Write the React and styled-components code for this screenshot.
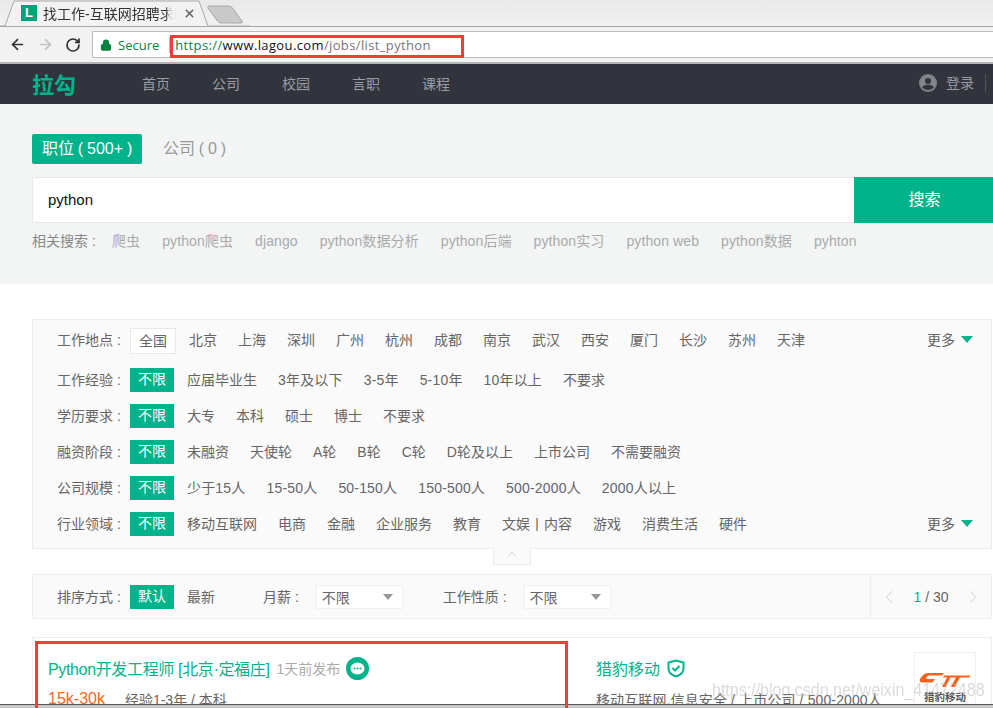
import React from 'react';
import styled, { createGlobalStyle } from 'styled-components';
import { ArrowLeft, ArrowRight, RotateCw, X, Lock, ChevronLeft, ChevronRight, ChevronUp } from 'lucide-react';

const GREEN = '#00b38a';
const FONT = '"Liberation Sans", "Noto Sans CJK SC", sans-serif';

const Global = createGlobalStyle`
    html, body {
        margin: 0;
        padding: 0;
        background: #fff;
    }
    * {
        box-sizing: border-box;
    }
`;

const Page = styled.div`
    position: relative;
    width: 993px;
    height: 708px;
    overflow: hidden;
    font-family: ${FONT};
    font-size: 14px;
    color: #666;
`;

/* browser chrome */
const TabStrip = styled.div`
    position: relative;
    height: 27px;
    padding-left: 21px;
    display: flex;
    align-items: center;
    background: linear-gradient(#e9e9e9, #f1f1f1);
    border-bottom: 1px solid #a8a8a8;
`;
const TabShape = styled.svg`
    position: absolute;
    left: 0;
    top: 0;
`;
const Favicon = styled.div`
    position: relative;
    width: 16px;
    height: 16px;
    margin-right: 6px;
    background: #00a37c;
    color: #fff;
    font: bold 13px/16px "Liberation Sans", sans-serif;
    text-align: center;
`;
const TabTitle = styled.div`
    position: relative;
    width: 134px;
    overflow: hidden;
    white-space: nowrap;
    font-size: 14px;
    color: #333;
    -webkit-mask-image: linear-gradient(to right, #000 92%, rgba(0, 0, 0, 0.25) 94%, transparent);
`;
const TabClose = styled(X)`
    position: relative;
    margin-left: 6px;
    color: #5a5a5a;
`;
const Toolbar = styled.div`
    height: 37px;
    display: flex;
    align-items: center;
    padding: 0 0 0 3px;
    background: #f2f2f2;
    border-bottom: 2px solid #b4b4b4;
`;
const NavIcon = styled.div`
    width: 28px;
    display: flex;
    justify-content: center;
    color: ${p => (p.$off ? '#c4c4c4' : '#333')};
`;
const AddressBar = styled.div`
    flex: 1;
    height: 27px;
    margin-left: 5px;
    display: flex;
    align-items: center;
    padding-left: 7px;
    background: #fff;
    border: 1px solid #bdbdbd;
    border-right: 0;
    border-radius: 2px 0 0 2px;
    font-family: "Open Sans", sans-serif;
    font-size: 13px;
`;
const SecureLabel = styled.span`
    margin-left: 6px;
    padding-right: 10px;
    color: #0b8043;
    border-right: 1px solid #bbb;
    line-height: 16px;
`;
const Url = styled.span`
    margin-left: 5px;
    letter-spacing: 0.37px;
    color: #777;
    b {
        font-weight: 400;
        color: #111;
    }
    i {
        font-style: normal;
        color: #0b8043;
    }
`;

/* site nav */
const SiteNav = styled.nav`
    height: 40px;
    display: flex;
    align-items: center;
    padding: 0 7px 2px 32px;
    background: #31343d;
    color: #9a9ca2;
`;
const Logo = styled.div`
    width: 110px;
    color: ${GREEN};
    font-size: 22px;
    font-weight: 700;
`;
const SiteLink = styled.a`
    margin-right: 42px;
`;
const Login = styled.div`
    margin-left: auto;
    display: flex;
    align-items: center;
    gap: 9px;
    padding-right: 11px;
    border-right: 1px solid #555;
    line-height: 13px;
`;

/* search */
const SearchArea = styled.section`
    height: 180px;
    padding: 30px 0 0 32px;
    background: #f2f5f4;
`;
const SearchTabs = styled.div`
    display: flex;
    align-items: center;
    font-size: 16px;
    word-spacing: -0.6px;
`;
const SearchTab = styled.div`
    width: ${p => (p.$active ? '110px' : 'auto')};
    height: 30px;
    line-height: 30px;
    padding: 0 ${p => (p.$active ? '10px' : '0')};
    margin-right: 21px;
    border-radius: 2px;
    white-space: pre;
    background: ${p => (p.$active ? GREEN : 'transparent')};
    color: ${p => (p.$active ? '#fff' : '#999')};
`;
const SearchRow = styled.div`
    display: flex;
    height: 46px;
    margin-top: 13px;
`;
const SearchInput = styled.div`
    width: 822px;
    padding-left: 15px;
    line-height: 44px;
    font-size: 15px;
    color: #111;
    background: #fff;
    border: 1px solid #e8eaea;
    border-right: 0;
`;
const SearchButton = styled.div`
    flex: 1;
    padding-left: 2px;
    background: ${GREEN};
    color: #fff;
    font-size: 16px;
    line-height: 46px;
    text-align: center;
`;
const Related = styled.div`
    display: flex;
    gap: 22px;
    margin-top: 10px;
    line-height: 17px;
    letter-spacing: 0.1px;
    color: #aaa;
`;
const RelatedLabel = styled.span`
    width: 58px;
    white-space: nowrap;
    letter-spacing: 0;
    color: #888;
`;

/* filters */
const FilterBox = styled.section`
    position: relative;
    margin: 35px 1px 0 32px;
    height: 230px;
    padding: 2px 18px 0 24px;
    background: #fafafa;
    border: 1px solid #ededed;
`;
const FilterRow = styled.div`
    height: 36px;
    display: flex;
    align-items: center;
    margin-bottom: ${p => (p.$first ? '4px' : '0')};
`;
const FilterLabel = styled.div`
    width: 73px;
    padding-bottom: 2px;
    white-space: pre;
    color: #666;
`;
const Option = styled.a`
    margin-right: 21px;
    padding-bottom: 2px;
    white-space: nowrap;
    color: #666;
    letter-spacing: ${p => (p.$num ? '0.18px' : '0')};
`;
const Selected = styled.a`
    width: 44px;
    height: 24px;
    margin-right: 13px;
    line-height: 23px;
    text-align: center;
    background: ${GREEN};
    color: #fff;
`;
const SelectedPlain = styled.a`
    width: 46px;
    height: 26px;
    margin: 2px 13px 0 0;
    line-height: 24px;
    text-align: center;
    background: #fff;
    border: 1px solid #e8e8e8;
    color: #666;
`;
const More = styled.a`
    margin-left: auto;
    padding-bottom: 2px;
    display: flex;
    align-items: center;
    gap: 6px;
    color: #666;
    &::after {
        content: '';
        border-left: 6.5px solid transparent;
        border-right: 6.5px solid transparent;
        border-top: 7px solid ${GREEN};
    }
`;
const Collapse = styled.div`
    position: absolute;
    left: 460px;
    bottom: -17px;
    height: 18px;
    width: 38px;
    display: flex;
    justify-content: center;
    background: #fafafa;
    border: 1px solid #ededed;
    border-top: 0;
    color: #ccc;
`;

/* sort bar */
const SortBar = styled.section`
    height: 45px;
    margin: 25px 1px 0 32px;
    padding: 1px 0 0 24px;
    display: flex;
    align-items: center;
    background: #fafafa;
    border: 1px solid #ededed;
`;
const SortLabel = styled.div`
    padding-bottom: 2px;
    white-space: pre;
    color: #666;
    margin-left: ${p => p.$gap || 0}px;
    margin-right: ${p => p.$after || 0}px;
`;
const FakeSelect = styled.div`
    width: 87px;
    height: 24px;
    padding-left: 5px;
    display: flex;
    align-items: center;
    justify-content: space-between;
    padding-right: 9px;
    background: #fff;
    border: 1px solid #f0f0f0;
    color: #666;
    &::after {
        content: '';
        border-left: 5.5px solid transparent;
        border-right: 5.5px solid transparent;
        border-top: 6px solid #999;
    }
`;
const Pager = styled.div`
    margin: -1px 0 0 auto;
    width: 121px;
    height: 43px;
    display: flex;
    align-items: center;
    justify-content: space-between;
    padding: 0 7px;
    border-left: 1px solid #ededed;
    color: #666;
    b {
        font-weight: 400;
        color: ${GREEN};
    }
`;

/* job card */
const JobCard = styled.section`
    height: 100px;
    margin: 18px 1px 0 32px;
    padding: 18px 15px 0 15px;
    display: flex;
    background: #fff;
    border: 1px solid #ededed;
`;
const JobLeft = styled.div`
    width: 548px;
`;
const JobRight = styled.div`
    flex: 1;
`;
const TitleLine = styled.div`
    display: flex;
    align-items: center;
    height: 24px;
`;
const JobTitle = styled.a`
    font-size: 16px;
    letter-spacing: -0.35px;
    color: ${GREEN};
    white-space: nowrap;
`;
const CompanyName = styled.a`
    margin-right: 7px;
    font-size: 16px;
    color: ${GREEN};
`;
const Posted = styled.span`
    margin-left: 7px;
    margin-right: 6px;
    color: #aaa;
`;
const Salary = styled.span`
    font-size: 16px;
    color: #fd661f;
    margin-right: 20px;
`;
const InfoLine = styled.div`
    margin-top: 7px;
    height: 24px;
    display: flex;
    align-items: center;
    white-space: nowrap;
    letter-spacing: ${p => (p.$wide ? '0.12px' : '0')};
    color: #666;
`;
const CompanyLogo = styled.div`
    width: 62px;
    height: 62px;
    margin-top: -4px;
    padding-top: 19px;
    text-align: center;
    border: 1px solid #f0f0f0;
    font-size: 10.5px;
    font-weight: 700;
    color: #555;
    line-height: 13px;
`;
const RightRow = styled.div`
    display: flex;
    justify-content: space-between;
`;

/* overlays on top of the picture */
const RedBox = styled.div`
    position: absolute;
    left: ${p => p.$x}px;
    top: ${p => p.$y}px;
    width: ${p => p.$w}px;
    height: ${p => p.$h}px;
    border: 3px solid #f93a3a;
`;
const Watermark = styled.div`
    position: absolute;
    left: 712px;
    top: 680px;
    font-size: 18px;
    line-height: 20px;
    transform: scaleX(0.89);
    transform-origin: left center;
    color: rgba(170, 170, 170, 0.42);
    white-space: nowrap;
`;
const BottomEdge = styled.div`
    position: absolute;
    left: 0;
    right: 0;
    bottom: 0;
    height: 4px;
    background: #c8c8c8;
    border-top: 1px solid #555;
`;

const filters = [
    { label: '工作经验 :', items: ['应届毕业生', '3年及以下', '3-5年', '5-10年', '10年以上', '不要求'] },
    { label: '学历要求 :', items: ['大专', '本科', '硕士', '博士', '不要求'] },
    { label: '融资阶段 :', items: ['未融资', '天使轮', 'A轮', 'B轮', 'C轮', 'D轮及以上', '上市公司', '不需要融资'] },
    { label: '公司规模 :', items: ['少于15人', '15-50人', '50-150人', '150-500人', '500-2000人', '2000人以上'] },
    { label: '行业领域 :', items: ['移动互联网', '电商', '金融', '企业服务', '教育', '文娱丨内容', '游戏', '消费生活', '硬件'], more: true },
];
const cities = ['北京', '上海', '深圳', '广州', '杭州', '成都', '南京', '武汉', '西安', '厦门', '长沙', '苏州', '天津'];
const related = ['爬虫', 'python爬虫', 'django', 'python数据分析', 'python后端', 'python实习', 'python web', 'python数据', 'pyhton'];
const links = ['首页', '公司', '校园', '言职', '课程'];

const App = () => {
    return (
        <Page>
            <Global />
            <TabStrip>
                <TabShape width="250" height="27">
                    <path d="M0 26H5L14 1H199L208 26H993" fill="#f2f2f2" stroke="#a8a8a8" />
                    <path d="M208 6H228C231 6 232 7 234 10L242 21C243 23 242 23 240 23H222C219 23 218 22 216 19L208 8Z" fill="#c9c9c9" stroke="#a8a8a8" />
                </TabShape>
                <Favicon>L</Favicon>
                <TabTitle>找工作-互联网招聘求职网</TabTitle>
                <TabClose size={13} strokeWidth={2.5} />
            </TabStrip>
            <Toolbar>
                <NavIcon><ArrowLeft size={17} strokeWidth={2.4} /></NavIcon>
                <NavIcon $off><ArrowRight size={17} strokeWidth={2.4} /></NavIcon>
                <NavIcon><RotateCw size={16} strokeWidth={2.6} /></NavIcon>
                <AddressBar>
                    <Lock size={12} color="#0b8043" fill="#0b8043" strokeWidth={2.5} />
                    <SecureLabel>Secure</SecureLabel>
                    <Url><i>https://</i><b>www.lagou.com</b>/jobs/list_python</Url>
                </AddressBar>
            </Toolbar>
            <SiteNav>
                <Logo>拉勾</Logo>
                {links.map(l => <SiteLink key={l}>{l}</SiteLink>)}
                <Login>
                    <svg width="18" height="18" viewBox="0 0 18 18">
                        <circle cx="9" cy="9" r="9" fill="#82848a" />
                        <circle cx="9" cy="7" r="3" fill="#31343d" />
                        <path d="M3.2 13.2C4.6 11.2 6.6 10.8 9 10.8S13.4 11.2 14.8 13.2C13.4 15 11.4 16 9 16S4.6 15 3.2 13.2Z" fill="#31343d" />
                    </svg>
                    登录
                </Login>
            </SiteNav>
            <SearchArea>
                <SearchTabs>
                    <SearchTab $active>职位 ( 500+ )</SearchTab>
                    <SearchTab>公司 ( 0 )</SearchTab>
                </SearchTabs>
                <SearchRow>
                    <SearchInput>python</SearchInput>
                    <SearchButton>搜索</SearchButton>
                </SearchRow>
                <Related>
                    <RelatedLabel>相关搜索 :</RelatedLabel>
                    {related.map(r => <span key={r}>{r}</span>)}
                </Related>
            </SearchArea>
            <FilterBox>
                <FilterRow $first>
                    <FilterLabel>工作地点 :</FilterLabel>
                    <SelectedPlain>全国</SelectedPlain>
                    {cities.map(c => <Option key={c}>{c}</Option>)}
                    <More>更多</More>
                </FilterRow>
                {filters.map(f => (
                    <FilterRow key={f.label}>
                        <FilterLabel>{f.label}</FilterLabel>
                        <Selected>不限</Selected>
                        {f.items.map(i => <Option key={i} $num={/\d/.test(i)}>{i}</Option>)}
                        {f.more && <More>更多</More>}
                    </FilterRow>
                ))}
                <Collapse><ChevronUp size={14} strokeWidth={1.5} /></Collapse>
            </FilterBox>
            <SortBar>
                <FilterLabel>排序方式 :</FilterLabel>
                <Selected>默认</Selected>
                <SortLabel>最新</SortLabel>
                <SortLabel $gap={48} $after={17}>月薪 :</SortLabel>
                <FakeSelect>不限</FakeSelect>
                <SortLabel $gap={40} $after={17}>工作性质 :</SortLabel>
                <FakeSelect>不限</FakeSelect>
                <Pager>
                    <ChevronLeft size={22} strokeWidth={1} color="#ccc" />
                    <span><b>1</b> / 30</span>
                    <ChevronRight size={22} strokeWidth={1} color="#ccc" />
                </Pager>
            </SortBar>
            <JobCard>
                <JobLeft>
                    <TitleLine>
                        <JobTitle>Python开发工程师 [北京·定福庄]</JobTitle>
                        <Posted>1天前发布</Posted>
                        <svg width="23" height="23" viewBox="0 0 23 23">
                            <circle cx="11.5" cy="11.5" r="11.5" fill={GREEN} />
                            <ellipse cx="11.5" cy="11.5" rx="7" ry="6" fill="#fff" />
                            <circle cx="8.5" cy="11.5" r="1" fill={GREEN} />
                            <circle cx="11.5" cy="11.5" r="1" fill={GREEN} />
                            <circle cx="14.5" cy="11.5" r="1" fill={GREEN} />
                        </svg>
                    </TitleLine>
                    <InfoLine>
                        <Salary>15k-30k</Salary>
                        经验1-3年 / 本科
                    </InfoLine>
                </JobLeft>
                <JobRight>
                    <RightRow>
                        <div>
                            <TitleLine>
                                <CompanyName>猎豹移动</CompanyName>
                                <svg width="18" height="19" viewBox="0 0 18 19">
                                    <path d="M9 1.5L16.5 3.5V9.5C16.5 13 13.5 16 9 17.5C4.5 16 1.5 13 1.5 9.5V3.5Z" fill="none" stroke={GREEN} strokeWidth="2" />
                                    <path d="M5.5 9L8 11.5L12.5 7" fill="none" stroke={GREEN} strokeWidth="2" />
                                </svg>
                            </TitleLine>
                            <InfoLine $wide>移动互联网,信息安全 / 上市公司 / 500-2000人</InfoLine>
                        </div>
                        <CompanyLogo>
                            <svg width="52" height="16" viewBox="0 0 52 16">
                                <path d="M9 1H25L23 3.5H11C9.5 3.5 8.5 4.2 7.5 5.2C6.5 6.4 7.5 7 9 7H16L13.5 10.5H4C0.5 10.5 -0.5 8 2 5.5C4 3 6 1 9 1Z" fill="#f0641e" />
                                <path d="M25 3.5H52L50 5.5H41L35.5 15H32L36.8 5.5H31.5L26.5 15H23L28 5.5H24Z" fill="#f0641e" />
                            </svg>
                            <div>猎豹移动</div>
                        </CompanyLogo>
                    </RightRow>
                </JobRight>
            </JobCard>
            <Watermark>https://blog.csdn.net/weixin_41472488</Watermark>
            <BottomEdge />
            <RedBox $x={170} $y={35} $w={294} $h={23} />
            <RedBox $x={35} $y={641} $w={533} $h={70} />
        </Page>
    );
};

export default App;
